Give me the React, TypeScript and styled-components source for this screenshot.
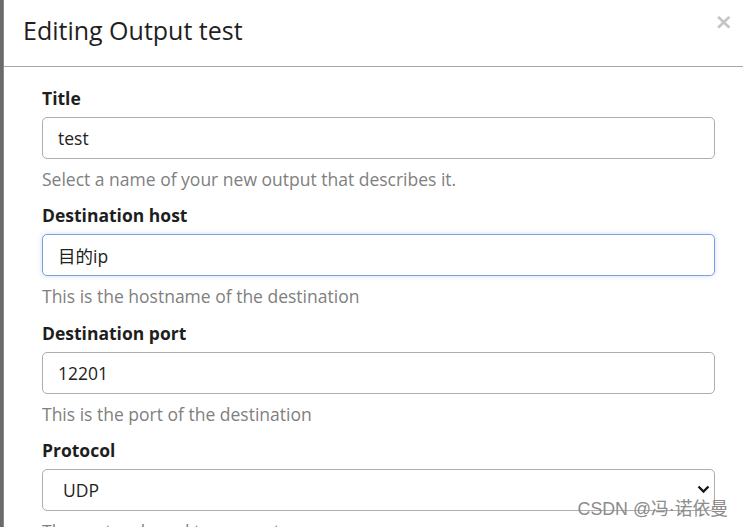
import React from 'react';
import styled, { createGlobalStyle } from 'styled-components';

const GlobalStyle = createGlobalStyle`
  html, body { margin: 0; padding: 0; height: 100%; overflow: hidden; }
  body { font-family: "Open Sans", "Noto Sans CJK SC", sans-serif; background: #fff; }
  #root { height: 100%; }
`;

const Page = styled.div`
  display: flex;
  height: 100%;
  position: relative;
`;

const Backdrop = styled.div`
  width: 4px;
  flex: none;
  background: #6a6a6a;
  border-right: 1px solid #8a8a8a;
  box-sizing: border-box;
`;

const Modal = styled.div`
  flex: 1;
  display: flex;
  flex-direction: column;
  background: #fff;
  min-width: 0;
`;

const Header = styled.div`
  flex: none;
  height: 67px;
  box-sizing: border-box;
  border-bottom: 1px solid #a8a8a8;
  display: flex;
  align-items: flex-start;
  justify-content: space-between;
  padding: 13px 10px 0 19px;
`;

const Title = styled.h4`
  margin: 0;
  font-size: 25px;
  font-weight: 400;
  line-height: 34px;
  color: #1f1f1f;
`;

const Close = styled.button`
  border: 0;
  background: none;
  padding: 0;
  margin-top: -4px;
  font-family: "DejaVu Sans", sans-serif;
  font-size: 22px;
  font-weight: 700;
  line-height: 26px;
  color: #c4c4c4;
  cursor: pointer;
`;

const Body = styled.div`
  flex: none;
  padding: 19px 28px 0 38px;
  display: flex;
  flex-direction: column;
`;

const Group = styled.div`
  flex: none;
  display: flex;
  flex-direction: column;
  margin-bottom: 12.3px;
`;

const Label = styled.label`
  font-size: 17.5px;
  font-weight: 700;
  line-height: 24px;
  color: #1e1e1e;
  margin-bottom: 7px;
`;

const Input = styled.input<{ $focused?: boolean }>`
  height: 42px;
  box-sizing: border-box;
  border: 1px solid ${p => (p.$focused ? '#7b9fe0' : '#adadad')};
  border-radius: 5px;
  padding: 0 15px;
  font-family: "Open Sans", "Noto Sans CJK SC", sans-serif;
  font-size: 17.5px;
  color: #222;
  outline: none;
  box-shadow: ${p => (p.$focused ? '0 0 5px rgba(110, 150, 230, 0.35)' : 'none')};
`;

const SelectBox = styled.div`
  height: 42px;
  box-sizing: border-box;
  border: 1px solid #adadad;
  border-radius: 5px;
  padding: 0 4px 0 20px;
  display: flex;
  align-items: center;
  justify-content: space-between;
  font-size: 17.5px;
  color: #222;
`;

const Help = styled.span`
  margin-top: 8px;
  font-size: 17.5px;
  line-height: 24px;
  color: #808080;
`;

const Watermark = styled.div`
  position: absolute;
  right: 15px;
  bottom: 7px;
  font-family: "Liberation Sans", "Noto Sans CJK SC", sans-serif;
  font-size: 17.8px;
  color: #8c8c8c;
  line-height: 22px;
`;

const Chevron = () => (
  <svg width="13" height="9" viewBox="0 0 13 9">
    <path d="M1.5 1.5 L6.5 6.5 L11.5 1.5" fill="none" stroke="#1a1a1a" strokeWidth="2.4" />
  </svg>
);

export default function App() {
  return (
    <Page>
      <GlobalStyle />
      <Backdrop />
      <Modal>
        <Header>
          <Title>Editing Output test</Title>
          <Close>×</Close>
        </Header>
        <Body>
          <Group>
            <Label>Title</Label>
            <Input defaultValue="test" />
            <Help>Select a name of your new output that describes it.</Help>
          </Group>
          <Group>
            <Label>Destination host</Label>
            <Input $focused defaultValue="目的ip" />
            <Help>This is the hostname of the destination</Help>
          </Group>
          <Group>
            <Label>Destination port</Label>
            <Input defaultValue="12201" />
            <Help>This is the port of the destination</Help>
          </Group>
          <Group>
            <Label>Protocol</Label>
            <SelectBox>
              <span>UDP</span>
              <Chevron />
            </SelectBox>
            <Help>The protocol used to connect</Help>
          </Group>
        </Body>
      </Modal>
      <Watermark>CSDN @冯·诺依曼</Watermark>
    </Page>
  );
}
